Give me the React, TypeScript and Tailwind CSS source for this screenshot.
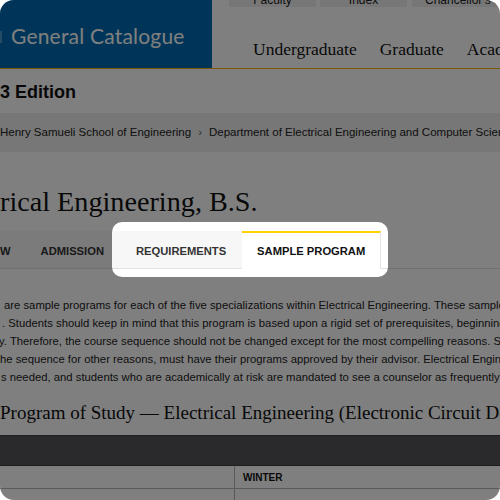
import React from 'react';

const sans = { fontFamily: '"Liberation Sans", Arial, sans-serif' };
const serif = { fontFamily: '"Liberation Serif", "Times New Roman", serif' };

const paragraph = [
  { text: 'are sample programs for each of the five specializations within Electrical Engineering. These sample programs', ml: 'ml-[4px]' },
  { text: '. Students should keep in mind that this program is based upon a rigid set of prerequisites, beginning with', ml: 'ml-[2px]' },
  { text: 'y. Therefore, the course sequence should not be changed except for the most compelling reasons. Students', ml: 'ml-[-1px]' },
  { text: 'he sequence for other reasons, must have their programs approved by their advisor. Electrical Engineering', ml: 'ml-0' },
  { text: 's needed, and students who are academically at risk are mandated to see a counselor as frequently as', ml: 'ml-[1px]' },
];

const App = () => {
  return (
    <div className="w-[500px] h-[500px] bg-white">
      <div className="relative w-full h-full overflow-hidden rounded-[14px] bg-white text-[#222]" style={sans}>
        {/* Header */}
        <div className="flex h-[69px] border-b border-[#f4b400]">
          <div className="w-[212px] shrink-0 h-full bg-[#006bb2] flex items-center pt-[3px]">
            <div className="w-[2px] h-[12px] bg-white/30 mt-[2px]" />
            <span
              className="ml-[9px] text-[21px] text-white whitespace-nowrap tracking-[0.2px]"
              style={{ fontFamily: 'Lato, "Open Sans", sans-serif' }}
            >
              General Catalogue
            </span>
          </div>
          <div className="flex-1 min-w-0 flex flex-col">
            <div className="h-[7px] overflow-hidden flex pl-[17px] gap-[4px] text-[12px] whitespace-nowrap">
              <div className="w-[87px] shrink-0 h-[14px] -mt-[7px] bg-[#eeeeee] flex items-center justify-center">Faculty</div>
              <div className="w-[87px] shrink-0 h-[14px] -mt-[7px] bg-[#eeeeee] flex items-center justify-center">Index</div>
              <div className="w-[100px] shrink-0 h-[14px] -mt-[7px] ml-[1px] bg-[#eeeeee] flex items-center pl-[13px]">Chancellor's List</div>
            </div>
            <nav className="flex items-center gap-[23px] pl-[41px] mt-[29px] text-[17.5px] text-[#111] whitespace-nowrap" style={serif}>
              <span>Undergraduate</span>
              <span>Graduate</span>
              <span>Academic Information</span>
            </nav>
          </div>
        </div>

        {/* Edition */}
        <div className="h-[44px] flex items-center pt-[2px] text-[18px] font-bold text-[#111]">3 Edition</div>

        {/* Breadcrumb */}
        <div className="h-[39px] bg-[#eeeeee] flex items-center text-[11.5px] text-[#222] whitespace-nowrap">
          <span>Henry Samueli School of Engineering</span>
          <span className="mx-[7px] text-[#666]">›</span>
          <span>Department of Electrical Engineering and Computer Science</span>
        </div>

        {/* Title */}
        <h1 className="mt-[34px] text-[28.2px] leading-[32px] text-[#111] whitespace-nowrap" style={serif}>
          rical Engineering, B.S.
        </h1>

        {/* Tabs */}
        <div className="mt-[13px] flex h-[38px] border-b border-[#e3e3e3] text-[11.2px] font-bold whitespace-nowrap">
          <div className="pr-[15px] pt-[3px] bg-[#f7f7f7] flex items-center text-[#333]">W</div>
          <div className="px-[15px] pt-[3px] bg-[#f7f7f7] flex items-center text-[#333]">ADMISSION</div>
          <div className="pl-[17px] pr-[16px] pt-[3px] bg-[#f7f7f7] flex items-center text-[#333]">REQUIREMENTS</div>
          <div className="px-[15px] pt-px bg-white border-t-2 border-t-[#ffd200] border-r border-r-[#e3e3e3] flex items-center text-[#111] -mb-px">
            SAMPLE PROGRAM
          </div>
        </div>

        {/* Intro paragraph */}
        <div className="mt-[27px] text-[11.3px] leading-[18px] text-[#222]">
          {paragraph.map((line, i) => (
            <div key={i} className={`whitespace-nowrap ${line.ml}`}>{line.text}</div>
          ))}
        </div>

        {/* Program heading */}
        <h2 className="mt-[15px] text-[19px] leading-[24px] text-[#111] whitespace-nowrap" style={serif}>
          Program of Study — Electrical Engineering (Electronic Circuit Design)
        </h2>

        {/* Table */}
        <div className="mt-[10px]">
          <div className="h-[31px] bg-[#555558] border-y border-[#3c3c3c]" />
          <div className="flex h-[23px] border-b border-[#b5b5b5]">
            <div className="w-[235px] border-r border-[#b5b5b5]" />
            <div className="pl-[8px] flex items-center text-[10px] font-bold text-[#111]">WINTER</div>
          </div>
          <div className="flex h-[23px]">
            <div className="w-[235px] border-r border-[#b5b5b5]" />
          </div>
        </div>

        {/* Spotlight overlay */}
        <div className="absolute left-[112px] top-[222px] w-[276px] h-[55px] rounded-[10px] shadow-[0_0_0_1000px_rgba(0,0,0,0.5)] pointer-events-none" />
      </div>
    </div>
  );
};

export default App;
